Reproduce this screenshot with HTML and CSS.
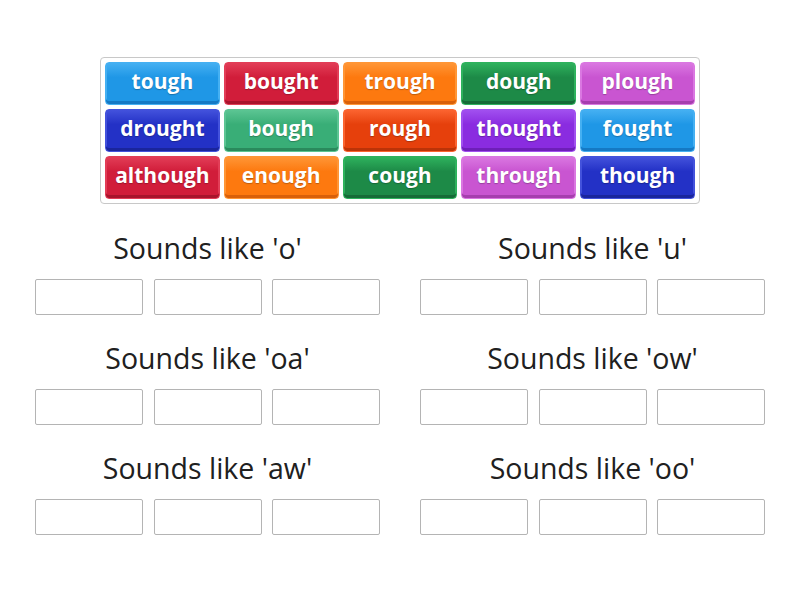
FILE: index.html
```html
<!DOCTYPE html>
<html>
<head>
<meta charset="utf-8">
<link rel="stylesheet" href="styles.css">
</head>
<body>
<div class="page">
  <div class="bank">
    <div class="tile sky">tough</div>
    <div class="tile crimson">bought</div>
    <div class="tile orange">trough</div>
    <div class="tile green">dough</div>
    <div class="tile orchid">plough</div>
    <div class="tile blue">drought</div>
    <div class="tile sea">bough</div>
    <div class="tile redorange">rough</div>
    <div class="tile purple">thought</div>
    <div class="tile sky">fought</div>
    <div class="tile crimson">although</div>
    <div class="tile orange">enough</div>
    <div class="tile green">cough</div>
    <div class="tile orchid">through</div>
    <div class="tile blue">though</div>
  </div>
  <div class="groups">
    <div class="group">
      <h2 class="title">Sounds like 'o'</h2>
      <div class="slots"><div class="slot"></div><div class="slot"></div><div class="slot"></div></div>
    </div>
    <div class="group">
      <h2 class="title">Sounds like 'u'</h2>
      <div class="slots"><div class="slot"></div><div class="slot"></div><div class="slot"></div></div>
    </div>
    <div class="group">
      <h2 class="title">Sounds like 'oa'</h2>
      <div class="slots"><div class="slot"></div><div class="slot"></div><div class="slot"></div></div>
    </div>
    <div class="group">
      <h2 class="title">Sounds like 'ow'</h2>
      <div class="slots"><div class="slot"></div><div class="slot"></div><div class="slot"></div></div>
    </div>
    <div class="group">
      <h2 class="title">Sounds like 'aw'</h2>
      <div class="slots"><div class="slot"></div><div class="slot"></div><div class="slot"></div></div>
    </div>
    <div class="group">
      <h2 class="title">Sounds like 'oo'</h2>
      <div class="slots"><div class="slot"></div><div class="slot"></div><div class="slot"></div></div>
    </div>
  </div>
</div>
</body>
</html>
```
FILE: styles.css
```css
html, body {
  margin: 0;
  padding: 0;
  background: #ffffff;
}
body {
  font-family: "Open Sans", "Liberation Sans", sans-serif;
  width: 800px;
  height: 600px;
  overflow: hidden;
}
.page {
  padding-top: 57px;
}
.bank {
  width: 600px;
  box-sizing: border-box;
  margin: 0 auto;
  border: 1px solid #c8c8c8;
  border-radius: 4px;
  padding: 4px;
  display: grid;
  grid-template-columns: repeat(5, 1fr);
  grid-auto-rows: 43px;
  gap: 4px;
}
.tile {
  --base: #1f97e6;
  --light: #4ab4f4;
  --dark: #1577c0;
  border-radius: 4px;
  border: 1px solid var(--light);
  background: linear-gradient(to bottom, var(--light) 0%, var(--base) 35%, var(--base) 100%);
  box-shadow: inset 0 -3px 0 var(--dark), inset 1px 0 0 var(--light), inset -1px 0 0 var(--light);
  color: #ffffff;
  font-weight: 700;
  font-size: 21px;
  display: flex;
  align-items: center;
  justify-content: center;
  padding-bottom: 5px;
  box-sizing: border-box;
  text-shadow: 0 1px 1px rgba(0, 0, 0, 0.25);
}
.sky { --base: #1f97e6; --light: #45b0f2; --dark: #1579c4; }
.crimson { --base: #d11d3a; --light: #e23d57; --dark: #a8142c; }
.orange { --base: #fd790f; --light: #ff9636; --dark: #d8600a; }
.green { --base: #1d8a47; --light: #2eb25d; --dark: #166b37; }
.orchid { --base: #c955d1; --light: #da77e1; --dark: #a63eae; }
.blue { --base: #2331c6; --light: #4352dc; --dark: #1a259c; }
.sea { --base: #39ae77; --light: #5cc593; --dark: #2a8a5c; }
.redorange { --base: #e6400c; --light: #fb6430; --dark: #bb3308; }
.purple { --base: #8a2ce0; --light: #a150ef; --dark: #6e1fb8; }

.groups {
  width: 730px;
  margin: 0 0 0 35px;
  padding-top: 24px;
  display: grid;
  grid-template-columns: 345px 345px;
  column-gap: 40px;
  row-gap: 23px;
}
.group {
  display: flex;
  flex-direction: column;
}
.title {
  margin: 0 0 12px 0;
  padding-top: 1px;
  font-size: 28.5px;
  font-weight: 400;
  line-height: 38px;
  color: #202020;
  text-align: center;
}
.slots {
  display: grid;
  grid-template-columns: 108px 108px 108px;
  column-gap: 10.5px;
}
.slot {
  height: 36px;
  box-sizing: border-box;
  border: 1px solid #b4b4b4;
  border-radius: 2px;
  background: #ffffff;
}
```
